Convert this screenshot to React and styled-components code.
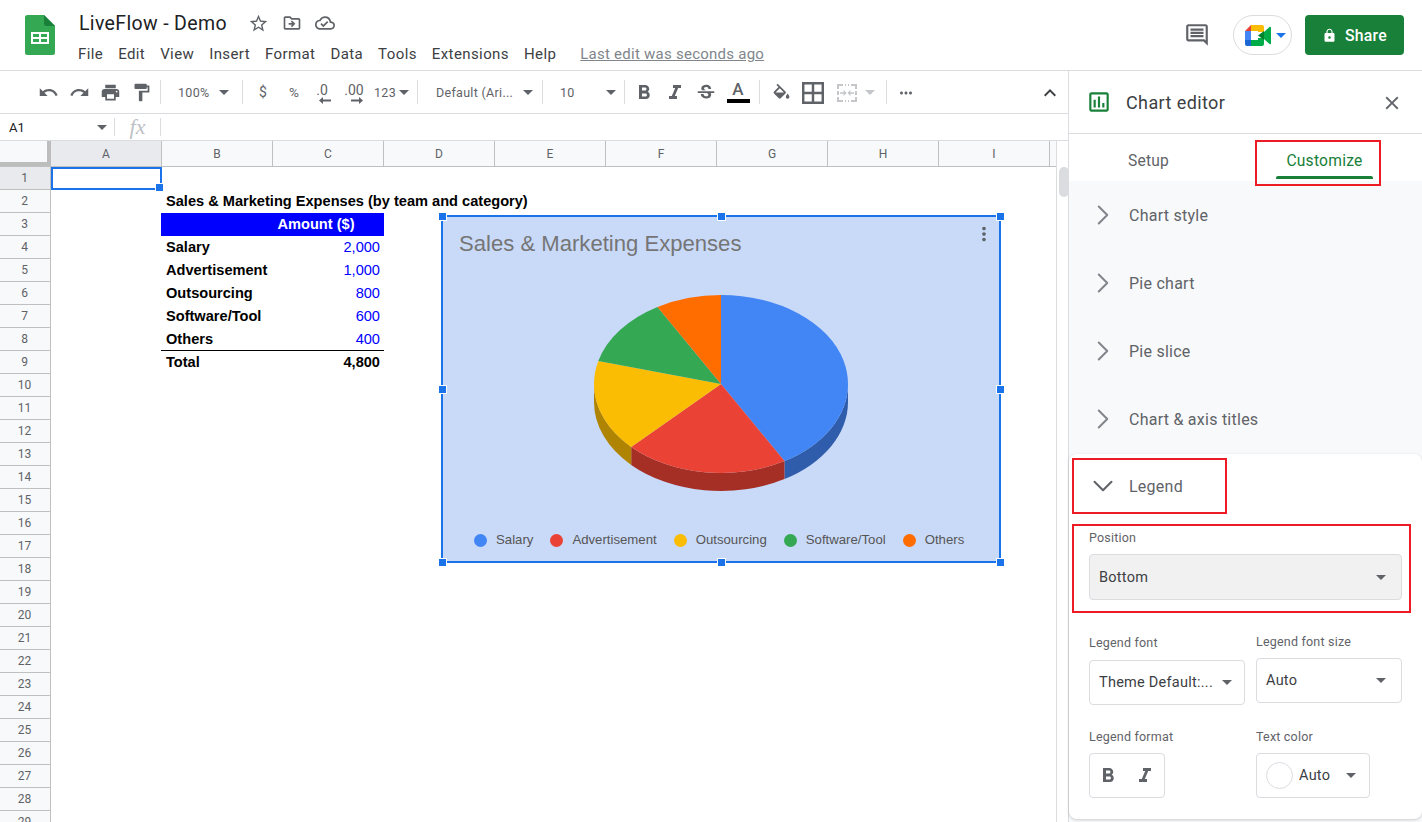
import React from "react";
import styled, { createGlobalStyle } from "styled-components";
import {
  MdUndo, MdRedo, MdPrint, MdFormatPaint, MdFormatBold, MdFormatItalic, MdStrikethroughS,
  MdMoreHoriz, MdExpandLess, MdStarBorder, MdOutlineDriveFileMove,
  MdOutlineCloudDone, MdLock, MdClose, MdOutlineInsertChart, MdOutlineComment,
} from "react-icons/md";
import { LuChevronRight, LuChevronDown } from "react-icons/lu";

const Global = createGlobalStyle`
  html, body { margin: 0; padding: 0; background: #fff; overflow: hidden; }
  * { box-sizing: border-box; }
  body { font-family: Roboto, "Liberation Sans", sans-serif; color: #202124; }
`;

const Page = styled.div`
  width: 1422px; height: 822px; display: flex; flex-direction: column; overflow: hidden; background: #fff;
`;
const Header = styled.header`
  height: 71px; flex: none; display: flex; align-items: flex-start; padding: 15px 18px 0 25px; border-bottom: 1px solid #dadce0;
`;
const LogoBox = styled.div` width: 30px; height: 40px; flex: none; `;
const TitleBlock = styled.div` margin-left: 23px; display: flex; flex-direction: column; margin-top: -5px; `;
const TitleRow = styled.div` display: flex; align-items: center; height: 26px; `;
const DocTitle = styled.div` font-size: 19.5px; color: #202124; letter-spacing: .35px; width: 163px; margin-left: 1px; white-space: nowrap; `;
const TitleIcon = styled.span`
  display: flex; width: 33px; justify-content: center; color: #5f6368; font-size: ${(p) => p.$s || 20}px;
`;
const MenuRow = styled.nav` display: flex; align-items: center; height: 26px; margin-top: 5px; gap: 15px; font-size: 15px; letter-spacing: .4px; color: #3c4043; `;
const MenuItem = styled.span` white-space: nowrap; `;
const LastEdit = styled.span` margin-left: 9px; color: #80868b; text-decoration: underline; white-space: nowrap; letter-spacing: .25px; `;
const HeaderRight = styled.div` margin-left: auto; display: flex; align-items: center; height: 40px; `;
const CommentIcon = styled.span` display: flex; color: #5f6368; font-size: 26px; margin-right: 23px; `;
const MeetPill = styled.div`
  width: 59px; height: 40px; border: 1px solid #dadce0; border-radius: 20px; display: flex; align-items: center; padding-left: 11px; gap: 5px; margin-right: 13px;
`;
const ShareBtn = styled.button`
  width: 99px; height: 40px; border: 0; border-radius: 4px; background: #188038; color: #fff; display: flex; align-items: center; justify-content: center; gap: 8px;
  font: 500 15.8px Roboto, sans-serif; letter-spacing: .25px; padding: 0;
  svg { font-size: 15px; }
`;

const Main = styled.main` flex: 1; display: flex; min-height: 0; `;
const LeftCol = styled.div` width: 1068px; flex: none; display: flex; flex-direction: column; min-height: 0; `;
const Toolbar = styled.div` height: 43px; flex: none; display: flex; align-items: center; padding-left: 33px; border-bottom: 1px solid #dadce0; color: #5f6368; `;
const ToolBtn = styled.span`
  width: ${(p) => p.$w || 31}px; height: 30px; flex: none; display: flex; align-items: center; justify-content: center; padding-top: 1px; font-size: ${(p) => p.$s || 21}px; color: ${(p) => (p.$off ? "#c4c6c9" : "#5f6368")};
`;
const ToolText = styled(ToolBtn)` font-size: ${(p) => p.$s || 13.5}px; letter-spacing: .2px; color: #5f6368; padding-top: 0; `;
const DecBtn = styled(ToolBtn)`
  flex-direction: column; font-size: 14px; line-height: 13px; padding-top: 3px; color: #5f6368;
  svg { display: block; margin: 0 0 0 6px; }
`;
const ToolDrop = styled.span`
  width: ${(p) => p.$w}px; height: 30px; flex: none; display: flex; align-items: center; padding: 0 ${(p) => p.$r ?? 10}px 0 ${(p) => p.$l ?? 15}px; justify-content: space-between; font-size: 12.5px; letter-spacing: .3px; color: #5f6368; white-space: nowrap;
`;
const Caret = styled.i`
  display: block; flex: none; width: 0; height: 0; border-left: 5px solid transparent; border-right: 5px solid transparent; border-top: 5px solid ${(p) => p.$c || "#5f6368"}; margin-left: ${(p) => p.$ml || 0}px;
`;
const Sep = styled.span` width: ${(p) => p.$w || 6}px; flex: none; height: 24px; position: relative; &::after { content: ""; position: absolute; left: 50%; top: 0; bottom: 0; width: 1px; margin-left: -.5px; background: #dadce0; } `;
const ColorA = styled.span`
  width: 30px; height: 30px; flex: none; display: flex; flex-direction: column; align-items: center; font: 500 17px/22px Roboto, sans-serif; color: #5f6368; padding-top: 1px;
  &::after { content: ""; width: 23px; height: 4px; background: #000; margin-top: -1px; }
`;
const Collapse = styled(ToolBtn)` margin-left: auto; width: 36px; font-size: 24px; color: #3c4043; `;

const FormulaBar = styled.div` height: 27px; flex: none; display: flex; align-items: center; border-bottom: 1px solid #dadce0; `;
const NameBox = styled.div` width: 114px; height: 100%; flex: none; display: flex; align-items: center; justify-content: space-between; padding: 0 7px 0 9px; font-size: 13px; color: #202124; `;
const FormulaDiv = styled.span` width: 1px; height: 18px; background: #dadce0; flex: none; `;
const Fx = styled.span` width: 45px; text-align: center; flex: none; font: italic 22px "Liberation Serif", serif; color: #bdc1c6; `;

const SheetArea = styled.div` flex: 1; display: flex; min-height: 0; `;
const Grid = styled.div` flex: 1; position: relative; overflow: hidden; font-family: "Liberation Sans", Arial, sans-serif; `;
const ColHeadRow = styled.div` height: 26px; display: flex; border-bottom: 1px solid #c0c0c0; background: #f8f9fa; `;
const Corner = styled.div` width: 51px; flex: none; background: #f8f9fa; border-right: 4px solid #bdbdbd; box-shadow: inset 0 -4px 0 #bdbdbd; `;
const ColHead = styled.div`
  width: 111px; flex: none; display: flex; align-items: center; justify-content: center; border-right: 1px solid #c0c0c0; font: 12px Roboto, sans-serif; color: #5f6368;
  background: ${(p) => (p.$active ? "#e8eaed" : "#f8f9fa")};
`;
const Row = styled.div` height: 23px; display: flex; `;
const RowHead = styled.div`
  width: 51px; flex: none; display: flex; align-items: center; justify-content: center; border-right: 1px solid #c0c0c0; border-bottom: 1px solid #c0c0c0; font: 12px Roboto, sans-serif; color: #5f6368; padding-right: 1px;
  background: ${(p) => (p.$active ? "#e8eaed" : "#f8f9fa")};
`;
const RowCells = styled.div` margin-left: 110px; display: flex; width: 223px; height: 100%; background: ${(p) => (p.$fill ? "#0000ff" : "transparent")}; box-shadow: ${(p) => (p.$rule ? "0 -1px 0 #000" : "none")}; `;
const Cell = styled.div`
  width: 50%; flex: none; padding: 0 4px 0 5px; font-size: 14.6px; line-height: 23px; white-space: nowrap; font-weight: ${(p) => (p.$bold ? 700 : 400)};
  color: ${(p) => p.$c || "#000"}; text-align: ${(p) => (p.$right ? "right" : "left")};
`;
const HeadCell = styled(Cell)` padding-right: 30px; `;
const Selection = styled.div`
  position: absolute; left: 51px; top: 26px; width: 111px; height: 23px; border: 2px solid #1a73e8;
  &::after { content: ""; position: absolute; right: -4px; bottom: -4px; width: 7px; height: 7px; background: #1a73e8; border: 1px solid #fff; }
`;

const ChartFrame = styled.div`
  position: absolute; left: 441px; top: 74px; width: 560px; height: 348px; border: 2px solid #1a73e8; background: #c9daf8; display: flex; flex-direction: column;
`;
const Handle = styled.span`
  position: absolute; left: ${(p) => p.$x}px; top: ${(p) => p.$y}px; width: 9px; height: 9px; margin: -4.5px 0 0 -4.5px; background: #1a73e8; border: 1px solid #fff;
`;
const ChartHead = styled.div` height: 53px; flex: none; padding: 12px 0 0 16px; display: flex; justify-content: space-between; `;
const ChartTitle = styled.div` font-size: 22.1px; line-height: 30px; color: #757575; white-space: nowrap; `;
const Kebab = styled.span` display: flex; font-size: 22px; color: #5f6368; margin: -6px 4px 0 0; transform: rotate(90deg); height: 22px; `;
const PieSvg = styled.svg` display: block; flex: none; width: 556px; height: 240px; `;
const Legend = styled.div` flex: 1; display: flex; padding: 9px 0 0 31px; font-size: 13.2px; line-height: 26px; color: #555; `;
const LegendItem = styled.div` display: flex; align-items: center; margin-right: 17px; white-space: nowrap; `;
const LegendDot = styled.i` width: 13px; height: 13px; border-radius: 50%; background: ${(p) => p.$c}; margin-right: 9px; flex: none; `;

const Scroll = styled.div` width: 12px; flex: none; border-left: 1px solid #dadce0; position: relative; `;
const Thumb = styled.div` position: absolute; left: 2px; top: 26px; width: 10px; height: 30px; border-radius: 5px; background: #dadce0; `;

const Panel = styled.aside` flex: 1; border-left: 1px solid #dadce0; position: relative; display: flex; flex-direction: column; background: #f8f9fa; min-height: 0; `;
const PanelHead = styled.div` height: 63px; flex: none; background: #fff; border-bottom: 1px solid #dadce0; display: flex; align-items: center; padding: 0 20px 0 18px; `;
const PanelIcon = styled.span` display: flex; font-size: 26px; color: #188038; margin-left: -1px; `;
const PanelTitle = styled.div` margin-left: 14px; font-size: 18px; color: #3c4043; letter-spacing: .4px; `;
const PanelClose = styled.span` margin-left: auto; display: flex; font-size: 22px; color: #5f6368; margin-top: 2px; `;
const Tabs = styled.div` height: 47px; flex: none; background: #fff; display: flex; align-items: center; position: relative; `;
const Tab = styled.div`
  position: absolute; top: 0; height: 47px; left: ${(p) => p.$l}px; width: ${(p) => p.$w}px; display: flex; align-items: center; justify-content: center; font-size: 15.6px; padding-top: 6px; letter-spacing: .25px;
  color: ${(p) => (p.$active ? "#188038" : "#5f6368")};
  ${(p) => p.$active && `&::after { content: ""; position: absolute; left: 0; right: 0; bottom: 2px; height: 3px; border-radius: 2px 2px 0 0; background: #188038; }`}
`;
const Section = styled.div` height: 68px; flex: none; display: flex; align-items: center; padding-left: 17px; color: #80868b; `;
const SectionLabel = styled.span` margin-left: 9px; font-size: 16px; letter-spacing: .25px; color: #5f6368; `;
const Card = styled.div` margin: 1px 1px 0 0; height: 365px; background: #fff; border-radius: 8px; box-shadow: 0 1px 3px rgba(60,64,67,.25); padding: 0 20px; `;
const CardHead = styled.div` height: 64px; display: flex; align-items: center; margin-left: -3px; color: #5f6368; `;
const FieldLabel = styled.div` font-size: 12.5px; line-height: 16px; color: #5f6368; letter-spacing: .2px; white-space: nowrap; `;
const Select = styled.div`
  margin-top: ${(p) => p.$gap ?? 8}px; height: ${(p) => p.$h || 45}px; border: 1px solid #dadce0; border-radius: 4px; background: ${(p) => (p.$fill ? "#f1f1f1" : "#fff")};
  display: flex; align-items: center; justify-content: space-between; padding: 0 15px 0 9px; font-size: 14.5px; letter-spacing: .25px; color: #3c4043; width: ${(p) => (p.$w ? p.$w + "px" : "auto")}; white-space: nowrap;
`;
const PosField = styled.div` padding-top: 12px; `;
const TwoCols = styled.div` display: grid; grid-template-columns: 156px 146px; column-gap: 11px; margin-top: ${(p) => p.$top}px; `;
const Field = styled.div` margin-top: ${(p) => p.$shift || 0}px; `;
const FormatBox = styled.div` margin-top: 8px; width: 76px; height: 45px; border: 1px solid #dadce0; border-radius: 4px; display: flex; align-items: center; gap: 13px; padding-left: 6px; color: #5f6368; font-size: 24px; `;
const ColorSwatch = styled.i` width: 27px; height: 27px; border-radius: 50%; border: 1px solid #dadce0; background: #fff; flex: none; margin-right: 6px; `;
const Annot = styled.div`
  position: absolute; left: ${(p) => p.$l}px; top: ${(p) => p.$t}px; width: ${(p) => p.$w}px; height: ${(p) => p.$h}px; border: 2px solid #ed1c24; pointer-events: none;
`;

const SheetsLogo = () => (
  <svg width="30" height="40" viewBox="0 0 30 40">
    <path d="M2.5 0H19l11 11v26.5a2.5 2.5 0 0 1-2.5 2.5h-25A2.5 2.5 0 0 1 0 37.5v-35A2.5 2.5 0 0 1 2.5 0z" fill="#34a853" />
    <path d="M19 0l11 11H21.5A2.5 2.5 0 0 1 19 8.5z" fill="#188038" />
    <path d="M6 17h18v12H6z" fill="#fff" />
    <path d="M8 19h6v3H8zM16 19h6v3h-6zM8 24h6v3H8zM16 24h6v3h-6z" fill="#34a853" />
  </svg>
);
const MeetLogo = () => (
  <svg width="26" height="21" viewBox="0 0 26 21" style={{ flex: "none" }}>
    <path d="M0 6L6 0v6z" fill="#ea4335" />
    <path d="M0 6h6v9H0z" fill="#4285f4" />
    <path d="M0 15h6v6H2a2 2 0 0 1-2-2z" fill="#1967d2" />
    <path d="M6 0h11a2 2 0 0 1 2 2v5l-6 0V6H6z" fill="#fbbc04" />
    <path d="M6 15h7v-2l6 0v6a2 2 0 0 1-2 2H6z" fill="#00ac47" />
    <path d="M13 10.5L19 6v9z" fill="#00832d" />
    <path d="M19 7l5.5-5c.7-.6 1.5-.2 1.5.7v15.6c0 .9-.8 1.3-1.5.7L19 14z" fill="#00ac47" />
  </svg>
);
const ArrowL = () => (<svg width="12" height="7" viewBox="0 0 12 7"><path d="M4 0L0 3.5 4 7V4.5h8v-2H4z" fill="#5f6368" /></svg>);
const ArrowR = () => (<svg width="12" height="7" viewBox="0 0 12 7"><path d="M8 0l4 3.5L8 7V4.5H0v-2h8z" fill="#5f6368" /></svg>);
const FillIcon = () => (
  <svg width="21" height="21" viewBox="0 0 24 20" fill="#5f6368">
    <path d="M16.56 8.94L7.62 0 6.21 1.41l2.38 2.38-5.15 5.15c-.59.59-.59 1.54 0 2.12l5.5 5.5c.29.29.68.44 1.06.44s.77-.15 1.06-.44l5.5-5.5c.59-.58.59-1.53 0-2.12zM5.21 10L10 5.21 14.79 10H5.21zM19 11.5s-2 2.17-2 3.5c0 1.1.9 2 2 2s2-.9 2-2c0-1.33-2-3.5-2-3.5z" />
  </svg>
);
const BordersIcon = () => (
  <svg width="22" height="22" viewBox="3 3 18 18" fill="#5f6368">
    <path d="M3 3v18h18V3H3zm8 16H5v-6h6v6zm0-8H5V5h6v6zm8 8h-6v-6h6v6zm0-8h-6V5h6v6z" />
  </svg>
);
const MergeIcon = () => (
  <svg width="22" height="20" viewBox="0 0 22 20" fill="#c4c6c9">
    <path d="M1 1h6v2H3v3H1zM15 1h6v5h-2V3h-4zM1 14h2v3h4v2H1zM19 14h2v5h-6v-2h4zM1 8h2v4H1zM19 8h2v4h-2zM9 1h1v2H9zM12 1h1v2h-1zM9 17h1v2H9zM12 17h1v2h-1z" />
    <path d="M4 9.2h3.6V7l3 3-3 3v-2.2H4zM18 9.2h-3.6V7l-3 3 3 3v-2.2H18z" />
  </svg>
);

const rows = {
  2: { title: "Sales & Marketing Expenses (by team and category)" },
  3: { head: true },
  4: { l: "Salary", v: "2,000" },
  5: { l: "Advertisement", v: "1,000" },
  6: { l: "Outsourcing", v: "800" },
  7: { l: "Software/Tool", v: "600" },
  8: { l: "Others", v: "400" },
  9: { l: "Total", v: "4,800", total: true },
};

const cx = 278, cy = 114, rx = 127, ry = 89, depth = 18;
const pt = (deg) => {
  const a = (deg * Math.PI) / 180;
  return [cx + rx * Math.sin(a), cy - ry * Math.cos(a)];
};
const slices = [
  { name: "Salary", from: 0, to: 150, c: "#4285f4" },
  { name: "Advertisement", from: 150, to: 225, c: "#ea4335" },
  { name: "Outsourcing", from: 225, to: 285, c: "#fbbc04" },
  { name: "Software/Tool", from: 285, to: 330, c: "#34a853" },
  { name: "Others", from: 330, to: 360, c: "#ff6d01" },
];
const topPath = (s) => {
  const [x1, y1] = pt(s.from), [x2, y2] = pt(s.to);
  return `M${cx} ${cy}L${x1} ${y1}A${rx} ${ry} 0 ${s.to - s.from > 180 ? 1 : 0} 1 ${x2} ${y2}Z`;
};
const sidePath = (from, to) => {
  const [x1, y1] = pt(from), [x2, y2] = pt(to);
  return `M${x1} ${y1}A${rx} ${ry} 0 0 1 ${x2} ${y2}L${x2} ${y2 + depth}A${rx} ${ry} 0 0 0 ${x1} ${y1 + depth}Z`;
};
const sides = [
  { from: 90, to: 150, d: "#2f5dab" },
  { from: 150, to: 225, d: "#a52f25" },
  { from: 225, to: 270, d: "#b08403" },
];
const handles = [-1, 278, 557].flatMap((x) => [-1, 172, 345].map((y) => [x, y])).filter(([x, y]) => !(x === 278 && y === 172));

export default function App() {
  return (
    <Page>
      <Global />
      <Header>
        <LogoBox><SheetsLogo /></LogoBox>
        <TitleBlock>
          <TitleRow>
            <DocTitle>LiveFlow - Demo</DocTitle>
            <TitleIcon $s={21}><MdStarBorder /></TitleIcon>
            <TitleIcon><MdOutlineDriveFileMove /></TitleIcon>
            <TitleIcon><MdOutlineCloudDone /></TitleIcon>
          </TitleRow>
          <MenuRow>
            {["File", "Edit", "View", "Insert", "Format", "Data", "Tools", "Extensions", "Help"].map((m) => <MenuItem key={m}>{m}</MenuItem>)}
            <LastEdit>Last edit was seconds ago</LastEdit>
          </MenuRow>
        </TitleBlock>
        <HeaderRight>
          <CommentIcon><MdOutlineComment /></CommentIcon>
          <MeetPill><MeetLogo /><Caret $c="#1a73e8" /></MeetPill>
          <ShareBtn><MdLock />Share</ShareBtn>
        </HeaderRight>
      </Header>
      <Main>
        <LeftCol>
          <Toolbar>
            <ToolBtn><MdUndo /></ToolBtn>
            <ToolBtn><MdRedo /></ToolBtn>
            <ToolBtn><MdPrint /></ToolBtn>
            <ToolBtn><MdFormatPaint /></ToolBtn>
            <Sep />
            <ToolDrop $w={76}>100%<Caret /></ToolDrop>
            <Sep />
            <ToolText $w={36} $s={14}>$</ToolText>
            <ToolText $w={26}>%</ToolText>
            <DecBtn $w={30}>.0<ArrowL /></DecBtn>
            <DecBtn $w={34}>.00<ArrowR /></DecBtn>
            <ToolDrop $w={43} $l={3} $r={5}>123<Caret /></ToolDrop>
            <Sep />
            <ToolDrop $w={119} $l={16} $r={6}>Default (Ari...<Caret /></ToolDrop>
            <Sep />
            <ToolDrop $w={76} $l={15} $r={5}>10<Caret /></ToolDrop>
            <Sep />
            <ToolBtn $w={34} $s={24}><MdFormatBold /></ToolBtn>
            <ToolBtn $w={28} $s={24}><MdFormatItalic /></ToolBtn>
            <ToolBtn $w={34} $s={22}><MdStrikethroughS /></ToolBtn>
            <ColorA>A</ColorA>
            <Sep $w={12} />
            <ToolBtn $w={32}><FillIcon /></ToolBtn>
            <ToolBtn $w={32}><BordersIcon /></ToolBtn>
            <ToolBtn $w={36}><MergeIcon /></ToolBtn>
            <ToolBtn $w={10}><Caret $c="#c4c6c9" /></ToolBtn>
            <Sep $w={22} />
            <ToolBtn $w={18} $s={22}><MdMoreHoriz /></ToolBtn>
            <Collapse><MdExpandLess /></Collapse>
          </Toolbar>
          <FormulaBar>
            <NameBox>A1<Caret /></NameBox>
            <FormulaDiv />
            <Fx>fx</Fx>
            <FormulaDiv />
          </FormulaBar>
          <SheetArea>
            <Grid>
              <ColHeadRow>
                <Corner />
                {"ABCDEFGHI".split("").map((c) => <ColHead key={c} $active={c === "A"}>{c}</ColHead>)}
              </ColHeadRow>
              {Array.from({ length: 29 }, (_, i) => i + 1).map((n) => {
                const r = rows[n];
                return (
                  <Row key={n}>
                    <RowHead $active={n === 1}>{n}</RowHead>
                    {r && (
                      <RowCells $fill={r.head} $rule={r.total}>
                        {r.title && <Cell $bold>{r.title}</Cell>}
                        {r.head && <><Cell /><HeadCell $bold $right $c="#fff">Amount ($)</HeadCell></>}
                        {r.l && <><Cell $bold>{r.l}</Cell><Cell $right $bold={r.total} $c={r.total ? "#000" : "#0000ff"}>{r.v}</Cell></>}
                      </RowCells>
                    )}
                  </Row>
                );
              })}
              <Selection />
              <ChartFrame>
                {handles.map(([x, y]) => <Handle key={`${x}-${y}`} $x={x} $y={y} />)}
                <ChartHead>
                  <ChartTitle>Sales &amp; Marketing Expenses</ChartTitle>
                  <Kebab><MdMoreHoriz /></Kebab>
                </ChartHead>
                <PieSvg viewBox="0 0 556 240">
                  {sides.map((s) => <path key={s.from} d={sidePath(s.from, s.to)} fill={s.d} />)}
                  {slices.map((s) => <path key={s.name} d={topPath(s)} fill={s.c} />)}
                </PieSvg>
                <Legend>
                  {slices.map((s) => <LegendItem key={s.name}><LegendDot $c={s.c} />{s.name}</LegendItem>)}
                </Legend>
              </ChartFrame>
            </Grid>
            <Scroll><Thumb /></Scroll>
          </SheetArea>
        </LeftCol>
        <Panel>
          <PanelHead>
            <PanelIcon><MdOutlineInsertChart /></PanelIcon>
            <PanelTitle>Chart editor</PanelTitle>
            <PanelClose><MdClose /></PanelClose>
          </PanelHead>
          <Tabs>
            <Tab $l={58} $w={43}>Setup</Tab>
            <Tab $l={207} $w={97} $active>Customize</Tab>
          </Tabs>
          {["Chart style", "Pie chart", "Pie slice", "Chart & axis titles"].map((s) => (
            <Section key={s}><LuChevronRight size={34} strokeWidth={1.4} /><SectionLabel>{s}</SectionLabel></Section>
          ))}
          <Card>
            <CardHead><LuChevronDown size={34} strokeWidth={1.4} /><SectionLabel>Legend</SectionLabel></CardHead>
            <PosField>
              <FieldLabel>Position</FieldLabel>
              <Select $fill $h={46}>Bottom<Caret /></Select>
            </PosField>
            <TwoCols $top={35}>
              <Field>
                <FieldLabel>Legend font</FieldLabel>
                <Select $gap={9} style={{ paddingRight: 12 }}>Theme Default:...<Caret /></Select>
              </Field>
              <Field $shift={-1}>
                <FieldLabel>Legend font size</FieldLabel>
                <Select>Auto<Caret /></Select>
              </Field>
            </TwoCols>
            <TwoCols $top={24}>
              <Field>
                <FieldLabel>Legend format</FieldLabel>
                <FormatBox><MdFormatBold /><MdFormatItalic /></FormatBox>
              </Field>
              <Field>
                <FieldLabel>Text color</FieldLabel>
                <Select $w={114} style={{ justifyContent: "flex-start" }}>
                  <ColorSwatch />Auto<Caret $ml={16} />
                </Select>
              </Field>
            </TwoCols>
          </Card>
          <Annot $l={186} $t={69} $w={126} $h={46} />
          <Annot $l={3} $t={387} $w={155} $h={56} />
          <Annot $l={3} $t={453} $w={339} $h={89} />
        </Panel>
      </Main>
    </Page>
  );
}
